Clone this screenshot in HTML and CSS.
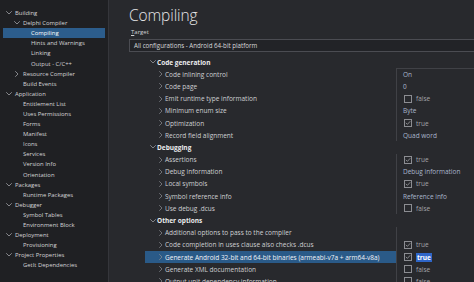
FILE: index.html
```html
<!DOCTYPE html>
<html lang="en">
<head>
    <meta charset="UTF-8">
    <title>Project Options - Compiling</title>
    <link rel="stylesheet" href="styles.css">
</head>
<body>
    <!-- Options tree -->
    <aside class="sidebar">
        <div class="node lvl0"><span class="chev"><svg viewBox="0 0 6 6"><polyline points="0.5,1.5 3,4 5.5,1.5"/></svg></span>Building</div>
        <div class="node lvl1"><span class="chev"><svg viewBox="0 0 6 6"><polyline points="0.5,1.5 3,4 5.5,1.5"/></svg></span>Delphi Compiler</div>
        <div class="node lvl2 selected"><span class="chev"></span>Compiling</div>
        <div class="node lvl2"><span class="chev"></span>Hints and Warnings</div>
        <div class="node lvl2"><span class="chev"></span>Linking</div>
        <div class="node lvl2"><span class="chev"></span>Output - C/C++</div>
        <div class="node lvl1"><span class="chev"><svg viewBox="0 0 6 6"><polyline points="1.5,0.5 4,3 1.5,5.5"/></svg></span>Resource Compiler</div>
        <div class="node lvl1"><span class="chev"></span>Build Events</div>
        <div class="node lvl0"><span class="chev"><svg viewBox="0 0 6 6"><polyline points="0.5,1.5 3,4 5.5,1.5"/></svg></span>Application</div>
        <div class="node lvl1"><span class="chev"></span>Entitlement List</div>
        <div class="node lvl1"><span class="chev"></span>Uses Permissions</div>
        <div class="node lvl1"><span class="chev"></span>Forms</div>
        <div class="node lvl1"><span class="chev"></span>Manifest</div>
        <div class="node lvl1"><span class="chev"></span>Icons</div>
        <div class="node lvl1"><span class="chev"></span>Services</div>
        <div class="node lvl1"><span class="chev"></span>Version Info</div>
        <div class="node lvl1"><span class="chev"></span>Orientation</div>
        <div class="node lvl0"><span class="chev"><svg viewBox="0 0 6 6"><polyline points="0.5,1.5 3,4 5.5,1.5"/></svg></span>Packages</div>
        <div class="node lvl1"><span class="chev"></span>Runtime Packages</div>
        <div class="node lvl0"><span class="chev"><svg viewBox="0 0 6 6"><polyline points="0.5,1.5 3,4 5.5,1.5"/></svg></span>Debugger</div>
        <div class="node lvl1"><span class="chev"></span>Symbol Tables</div>
        <div class="node lvl1"><span class="chev"></span>Environment Block</div>
        <div class="node lvl0"><span class="chev"><svg viewBox="0 0 6 6"><polyline points="0.5,1.5 3,4 5.5,1.5"/></svg></span>Deployment</div>
        <div class="node lvl1"><span class="chev"></span>Provisioning</div>
        <div class="node lvl0"><span class="chev"><svg viewBox="0 0 6 6"><polyline points="0.5,1.5 3,4 5.5,1.5"/></svg></span>Project Properties</div>
        <div class="node lvl1"><span class="chev"></span>GetIt Dependencies</div>
    </aside>

    <!-- Page content -->
    <main class="page">
        <h1>Compiling</h1>
        <div class="target-label"><u>T</u>arget</div>
        <div class="target-select">All configurations - Android 64-bit platform</div>

        <div class="grid">
            <div class="row category">
                <div class="name"><span class="chev"><svg viewBox="0 0 6 6"><polyline points="0.5,1.5 3,4 5.5,1.5"/></svg></span>Code generation</div>
                <div class="value"></div>
            </div>
            <div class="row">
                <div class="name"><span class="chev"><svg viewBox="0 0 6 6"><polyline points="1.5,0.5 4,3 1.5,5.5"/></svg></span>Code inlining control</div>
                <div class="value first">On</div>
            </div>
            <div class="row">
                <div class="name"><span class="chev"><svg viewBox="0 0 6 6"><polyline points="1.5,0.5 4,3 1.5,5.5"/></svg></span>Code page</div>
                <div class="value">0</div>
            </div>
            <div class="row">
                <div class="name"><span class="chev"><svg viewBox="0 0 6 6"><polyline points="1.5,0.5 4,3 1.5,5.5"/></svg></span>Emit runtime type information</div>
                <div class="value"><span class="box"></span><span class="flag">false</span></div>
            </div>
            <div class="row">
                <div class="name"><span class="chev"><svg viewBox="0 0 6 6"><polyline points="1.5,0.5 4,3 1.5,5.5"/></svg></span>Minimum enum size</div>
                <div class="value">Byte</div>
            </div>
            <div class="row">
                <div class="name"><span class="chev"><svg viewBox="0 0 6 6"><polyline points="1.5,0.5 4,3 1.5,5.5"/></svg></span>Optimization</div>
                <div class="value"><span class="box checked"><svg viewBox="0 0 7 7"><polyline points="1.3,3.6 2.8,5.1 5.8,1.8"/></svg></span><span class="flag">true</span></div>
            </div>
            <div class="row">
                <div class="name"><span class="chev"><svg viewBox="0 0 6 6"><polyline points="1.5,0.5 4,3 1.5,5.5"/></svg></span>Record field alignment</div>
                <div class="value">Quad word</div>
            </div>
            <div class="row category">
                <div class="name"><span class="chev"><svg viewBox="0 0 6 6"><polyline points="0.5,1.5 3,4 5.5,1.5"/></svg></span>Debugging</div>
                <div class="value"></div>
            </div>
            <div class="row">
                <div class="name"><span class="chev"><svg viewBox="0 0 6 6"><polyline points="1.5,0.5 4,3 1.5,5.5"/></svg></span>Assertions</div>
                <div class="value"><span class="box checked"><svg viewBox="0 0 7 7"><polyline points="1.3,3.6 2.8,5.1 5.8,1.8"/></svg></span><span class="flag">true</span></div>
            </div>
            <div class="row">
                <div class="name"><span class="chev"><svg viewBox="0 0 6 6"><polyline points="1.5,0.5 4,3 1.5,5.5"/></svg></span>Debug information</div>
                <div class="value">Debug information</div>
            </div>
            <div class="row">
                <div class="name"><span class="chev"><svg viewBox="0 0 6 6"><polyline points="1.5,0.5 4,3 1.5,5.5"/></svg></span>Local symbols</div>
                <div class="value"><span class="box checked"><svg viewBox="0 0 7 7"><polyline points="1.3,3.6 2.8,5.1 5.8,1.8"/></svg></span><span class="flag">true</span></div>
            </div>
            <div class="row">
                <div class="name"><span class="chev"><svg viewBox="0 0 6 6"><polyline points="1.5,0.5 4,3 1.5,5.5"/></svg></span>Symbol reference info</div>
                <div class="value">Reference info</div>
            </div>
            <div class="row">
                <div class="name"><span class="chev"><svg viewBox="0 0 6 6"><polyline points="1.5,0.5 4,3 1.5,5.5"/></svg></span>Use debug .dcus</div>
                <div class="value"><span class="box"></span><span class="flag">false</span></div>
            </div>
            <div class="row category">
                <div class="name"><span class="chev"><svg viewBox="0 0 6 6"><polyline points="0.5,1.5 3,4 5.5,1.5"/></svg></span>Other options</div>
                <div class="value"></div>
            </div>
            <div class="row">
                <div class="name"><span class="chev"><svg viewBox="0 0 6 6"><polyline points="1.5,0.5 4,3 1.5,5.5"/></svg></span>Additional options to pass to the compiler</div>
                <div class="value"></div>
            </div>
            <div class="row">
                <div class="name"><span class="chev"><svg viewBox="0 0 6 6"><polyline points="1.5,0.5 4,3 1.5,5.5"/></svg></span>Code completion in uses clause also checks .dcus</div>
                <div class="value"><span class="box checked"><svg viewBox="0 0 7 7"><polyline points="1.3,3.6 2.8,5.1 5.8,1.8"/></svg></span><span class="flag">true</span></div>
            </div>
            <div class="row selected">
                <div class="name"><span class="chev"><svg viewBox="0 0 6 6"><polyline points="1.5,0.5 4,3 1.5,5.5"/></svg></span>Generate Android 32-bit and 64-bit binaries (armeabi-v7a + arm64-v8a)</div>
                <div class="value"><span class="box checked"><svg viewBox="0 0 7 7"><polyline points="1.3,3.6 2.8,5.1 5.8,1.8"/></svg></span><span class="flag editing">true</span></div>
            </div>
            <div class="row">
                <div class="name"><span class="chev"><svg viewBox="0 0 6 6"><polyline points="1.5,0.5 4,3 1.5,5.5"/></svg></span>Generate XML documentation</div>
                <div class="value"><span class="box"></span><span class="flag">false</span></div>
            </div>
            <div class="row">
                <div class="name"><span class="chev"><svg viewBox="0 0 6 6"><polyline points="1.5,0.5 4,3 1.5,5.5"/></svg></span>Output unit dependency information</div>
                <div class="value"><span class="box"></span><span class="flag">false</span></div>
            </div>
        </div>
    </main>
</body>
</html>
```

FILE: styles.css
```css
/* General Styles */
body {
    font-family: 'Open Sans', 'Noto Sans', sans-serif;
    font-size: 6.5px;
    color: #d4d4d6;
    background-color: #28292d;
    margin: 0;
    padding: 0;
    display: flex;
    height: 282px;
    overflow: hidden;
}
svg {
    display: block;
    fill: none;
    stroke-linecap: round;
    stroke-linejoin: round;
}
/* Sidebar tree */
.sidebar {
    width: 102px;
    flex-shrink: 0;
    padding: 8px 3px 0 3px;
    background-color: #1f2023;
    border-right: 1px solid #35363b;
    margin-right: 3px;
    font-size: 5.9px;
}
.node {
    display: flex;
    align-items: center;
    height: 10.1px;
    white-space: nowrap;
    padding-left: 1px;
}
.node.lvl1 {
    padding-left: 9px;
}
.node.lvl2 {
    padding-left: 17px;
}
.node .chev {
    width: 11px;
    height: 6px;
    flex-shrink: 0;
}
.node .chev svg {
    width: 6px;
    height: 6px;
    margin-left: 2px;
    stroke: #a0a1a6;
    stroke-width: 0.8;
}
.node.selected {
    background-color: #2c5d8c;
    color: #ffffff;
}
/* Page content */
.page {
    flex: 1;
    padding: 5px 0 0 17px;
    min-width: 0;
}
.page h1 {
    font-family: 'Open Sans', 'Noto Sans', sans-serif;
    font-weight: 300;
    font-size: 15.5px;
    line-height: 20px;
    margin: 0;
    color: #e6e6e8;
    letter-spacing: -0.1px;
}
.target-label {
    font-size: 6px;
    line-height: 9px;
    margin: 3px 0 0 2px;
    color: #cfd0d3;
}
.target-label u {
    text-decoration: underline;
}
.target-select {
    margin-top: 2px;
    height: 11px;
    line-height: 11px;
    padding-left: 4px;
    border: 1px solid #4b4c52;
    border-right: none;
    background-color: #222327;
    color: #d8d8da;
    font-size: 6.2px;
}
/* Property grid */
.grid {
    margin: 4px 0 0 16px;
}
.row {
    display: grid;
    grid-template-columns: 251px 1fr;
    height: 12.2px;
}
.row .name {
    display: flex;
    align-items: center;
    white-space: nowrap;
    overflow: hidden;
    padding-left: 12px;
    color: #cfd0d3;
}
.row .chev {
    width: 8px;
    height: 6px;
    flex-shrink: 0;
}
.row .chev svg {
    width: 6px;
    height: 6px;
    margin-left: 1px;
    stroke: #8f9096;
    stroke-width: 0.7;
}
.row.category .name {
    padding-left: 3px;
    font-weight: 700;
    color: #ececee;
}
.row.category .chev {
    width: 9px;
}
.row.category .chev svg {
    margin-left: 2px;
    stroke: #a8a9ae;
}
.row.selected .name {
    background-color: #2a5a88;
    color: #f2f4f8;
}
.value {
    display: flex;
    align-items: center;
    padding-left: 6px;
    border-left: 1px solid #404146;
    color: #a9b6cc;
    white-space: nowrap;
}
.value.first {
    border-top: 1px solid #404146;
}
.row.category .value {
    border-left: none;
}
.box {
    width: 6px;
    height: 6px;
    border: 1px solid #8c8d92;
    margin: 0 4px 0 1px;
    flex-shrink: 0;
}
.box svg {
    width: 6px;
    height: 6px;
    stroke: #b5b6ba;
    stroke-width: 0.8;
}
.flag {
    color: #a3a4a9;
}
.flag.editing {
    background-color: #2f66c8;
    color: #ffffff;
    font-weight: 700;
    padding: 0 1px;
}
```
